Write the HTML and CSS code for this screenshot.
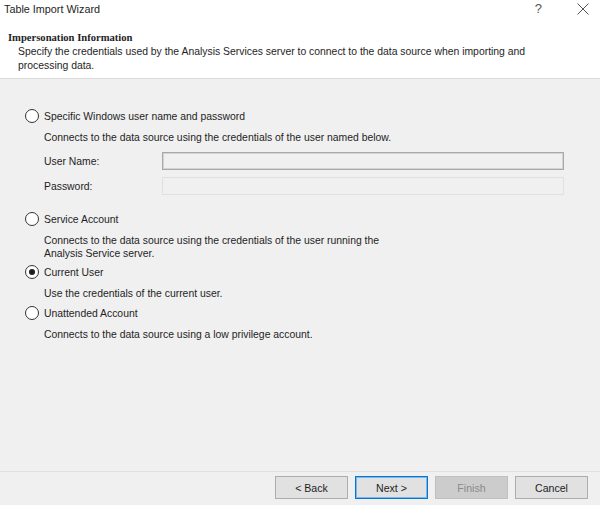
FILE: index.html
```html
<!DOCTYPE html>
<html lang="en">
  <head>
    <meta charset="UTF-8" />
    <meta name="viewport" content="width=device-width, initial-scale=1.0" />
    <title>Table Import Wizard</title>
    <link rel="stylesheet" href="styles.css">
  </head>

  <body>
    <div class="window">
      <div class="top">
        <div class="titlebar">
          <span class="title">Table Import Wizard</span>
          <div class="title-buttons">
            <span class="help">?</span>
            <svg class="close" width="12" height="12" viewBox="0 0 12 12">
              <path d="M0.5 0.5 L11.5 11.5 M11.5 0.5 L0.5 11.5" stroke="#555" stroke-width="1" fill="none" />
            </svg>
          </div>
        </div>
        <div class="header">
          <h2>Impersonation Information</h2>
          <p>Specify the credentials used by the Analysis Services server to connect to the data source when importing and processing data.</p>
        </div>
      </div>

      <div class="content">
        <div class="option first">
          <label class="radio-row">
            <span class="radio"></span>
            Specific Windows user name and password
          </label>
          <p class="desc">Connects to the data source using the credentials of the user named below.</p>
          <div class="credentials">
            <div class="field">
              <span class="field-label">User Name:</span>
              <span class="input"></span>
            </div>
            <div class="field">
              <span class="field-label">Password:</span>
              <span class="input disabled"></span>
            </div>
          </div>
        </div>

        <div class="option service">
          <label class="radio-row">
            <span class="radio"></span>
            Service Account
          </label>
          <p class="desc">Connects to the data source using the credentials of the user running the<br>Analysis Service server.</p>
        </div>

        <div class="option current">
          <label class="radio-row">
            <span class="radio checked"></span>
            Current User
          </label>
          <p class="desc">Use the credentials of the current user.</p>
        </div>

        <div class="option unattended">
          <label class="radio-row">
            <span class="radio"></span>
            Unattended Account
          </label>
          <p class="desc">Connects to the data source using a low privilege account.</p>
        </div>
      </div>

      <div class="footer">
        <button type="button">&lt; Back</button>
        <button type="button" class="default">Next &gt;</button>
        <button type="button" class="disabled">Finish</button>
        <button type="button">Cancel</button>
      </div>
    </div>
  </body>
</html>
```

FILE: styles.css
```css
body {
  margin: 0;
  padding: 0;
  font-family: "Liberation Sans", Arial, sans-serif;
  font-size: 10.4px;
  color: #1e1e1e;
  background-color: #f0f0f0;
}

.window {
  display: flex;
  flex-direction: column;
  height: 505px;
}

.top {
  background-color: #fff;
  border-bottom: 1px solid #dadada;
}

.titlebar {
  display: flex;
  justify-content: space-between;
  align-items: center;
  height: 17px;
  padding-left: 4px;
  font-size: 10.8px;
}

.title-buttons {
  display: flex;
  align-items: center;
}

.help {
  color: #555;
  font-size: 13px;
  margin-right: 35px;
}

.close {
  margin-right: 11px;
}

.header {
  padding: 14px 8px 5px 8px;
}

.header h2 {
  margin: 0;
  font-family: "Liberation Serif", "Times New Roman", serif;
  font-size: 10.6px;
  font-weight: bold;
  line-height: 14px;
}

.header p {
  margin: 0;
  padding-left: 10px;
  padding-right: 50px;
  line-height: 14px;
}

.content {
  flex: 1;
  padding: 0 36px 0 25px;
}

.option.first {
  margin-top: 29px;
}

.option.service {
  margin-top: 16px;
}

.option.current {
  margin-top: 4px;
}

.option.unattended {
  margin-top: 5px;
}

.radio-row {
  display: flex;
  align-items: center;
  height: 16px;
}

.radio {
  box-sizing: border-box;
  width: 14px;
  height: 14px;
  margin-right: 5px;
  border: 1px solid #333;
  border-radius: 50%;
  background-color: #fff;
  position: relative;
}

.radio.checked::after {
  content: "";
  position: absolute;
  left: 3px;
  top: 3px;
  width: 6px;
  height: 6px;
  border-radius: 50%;
  background-color: #1e1e1e;
}

.desc {
  margin: 7px 0 0 19px;
  line-height: 13px;
}

.credentials {
  margin: 8px 0 0 19px;
}

.field {
  display: flex;
  align-items: center;
  margin-bottom: 7px;
}

.field-label {
  width: 118px;
}

.input {
  box-sizing: border-box;
  display: block;
  width: 402px;
  height: 18px;
  border: 1px solid #a8a8a8;
  box-shadow: inset 0 0 0 1px #d4d4d4;
}

.input.disabled {
  border-color: #e0e0e0;
  box-shadow: none;
}

.footer {
  display: flex;
  justify-content: flex-end;
  gap: 7px;
  padding: 4px 12px 0 0;
  border-top: 1px solid #dfdfdf;
  box-sizing: border-box;
  height: 34px;
}

.footer button {
  box-sizing: border-box;
  width: 73px;
  height: 23px;
  font-family: "Liberation Sans", Arial, sans-serif;
  font-size: 10.6px;
  color: #1e1e1e;
  background-color: #e1e1e1;
  border: 1px solid #adadad;
  padding: 0;
}

.footer button.default {
  border: 1px solid #0078d7;
  box-shadow: inset 0 0 0 1px #7fb6e6;
}

.footer button.disabled {
  background-color: #cccccc;
  border-color: #bfbfbf;
  color: #8a8a8a;
}
```
